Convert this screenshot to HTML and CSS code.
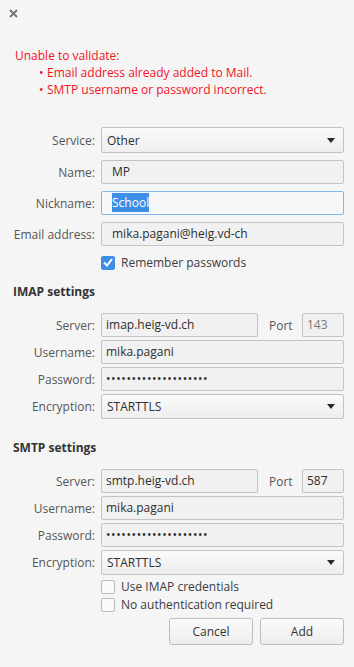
FILE: index.html
```html
<!DOCTYPE html>
<html>
<head>
<meta charset="utf-8">
<link rel="stylesheet" href="styles.css">
</head>
<body>
<div class="dialog">
  <div class="titlebar">
    <svg class="close" width="9" height="9" viewBox="0 0 9 9"><path d="M1 1 L8 8 M8 1 L1 8" stroke="#7b7b7b" stroke-width="2"/></svg>
  </div>
  <div class="errors">
    <div class="err-title">Unable to validate:</div>
    <ul>
      <li>Email address already added to Mail.</li>
      <li>SMTP username or password incorrect.</li>
    </ul>
  </div>

  <div class="form top">
    <label class="lbl">Service:</label>
    <div class="combo tall"><span>Other</span><span class="arrow"></span></div>
    <label class="lbl">Name:</label>
    <div class="entry pad">MP</div>
    <label class="lbl">Nickname:</label>
    <div class="entry pad focus"><span class="sel">School</span></div>
    <label class="lbl">Email address:</label>
    <div class="entry pad">mika.pagani@heig.vd-ch</div>
    <span></span>
    <div class="check-row"><span class="cb checked"><svg width="10" height="9" viewBox="0 0 10 9"><path d="M1 4.5 L4 7.5 L9 1" stroke="#fff" stroke-width="2" fill="none"/></svg></span>Remember passwords</div>
  </div>

  <h2 class="section imap">IMAP settings</h2>
  <div class="form sec">
    <label class="lbl">Server:</label>
    <div class="server-row">
      <div class="entry grow">imap.heig-vd.ch</div>
      <span class="port-lbl">Port</span>
      <div class="entry port dim">143</div>
    </div>
    <label class="lbl">Username:</label>
    <div class="entry">mika.pagani</div>
    <label class="lbl">Password:</label>
    <div class="entry dots">••••••••••••••••••••</div>
    <label class="lbl">Encryption:</label>
    <div class="combo enc"><span>STARTTLS</span><span class="arrow"></span></div>
  </div>

  <h2 class="section smtp">SMTP settings</h2>
  <div class="form sec">
    <label class="lbl">Server:</label>
    <div class="server-row">
      <div class="entry grow">smtp.heig-vd.ch</div>
      <span class="port-lbl">Port</span>
      <div class="entry port">587</div>
    </div>
    <label class="lbl">Username:</label>
    <div class="entry">mika.pagani</div>
    <label class="lbl">Password:</label>
    <div class="entry dots">••••••••••••••••••••</div>
    <label class="lbl">Encryption:</label>
    <div class="combo enc"><span>STARTTLS</span><span class="arrow"></span></div>
    <span></span>
    <div class="checks">
      <div class="check-row"><span class="cb"></span>Use IMAP credentials</div>
      <div class="check-row"><span class="cb"></span>No authentication required</div>
    </div>
  </div>

  <div class="buttons">
    <button class="btn">Cancel</button>
    <button class="btn">Add</button>
  </div>
</div>
</body>
</html>
```
FILE: styles.css
```css
* { box-sizing: border-box; }
html, body { margin: 0; padding: 0; }
body {
  background: #f5f5f5;
  font-family: "Open Sans", "DejaVu Sans", sans-serif;
  font-size: 12px;
  color: #3c3c3c;
  width: 354px;
  height: 667px;
  overflow: hidden;
}
.dialog { padding: 0 10px 0 0; }
.titlebar { height: 26px; padding: 9px 0 0 9px; }
.close { display: block; }

.errors {
  color: #f0141e;
  font-size: 12px;
  line-height: 17px;
  padding: 21px 0 0 15px;
}
.errors ul { margin: 0; padding: 0 0 0 24px; list-style: none; }
.errors li { position: relative; padding-left: 8px; }
.errors li::before {
  content: "•";
  position: absolute;
  left: 0;
  top: 0;
}

.form {
  display: grid;
  grid-template-columns: 95px 243px;
  column-gap: 6px;
  align-items: center;
}
.form.top { margin-top: 29px; row-gap: 7px; }
.form.sec { margin-top: 13px; row-gap: 3px; }
.lbl {
  text-align: right;
  color: #555;
  white-space: nowrap;
  font-size: 12px;
}
.entry {
  height: 24px;
  border: 1px solid #c3c3c3;
  border-radius: 2px;
  background: #f1f1f1;
  color: #2e2e2e;
  padding: 0 4px;
  line-height: 22px;
  white-space: nowrap;
  overflow: hidden;
}
.entry.pad { padding-left: 10px; }
.entry.focus {
  border-color: #85b6ec;
  background: #f6f7f8;
}
.sel {
  background: #3d8fe6;
  color: #fff;
  padding: 1px 0;
}
.entry.dots { letter-spacing: 0.6px; font-size: 12px; }
.entry.dim { color: #777; }
.combo {
  height: 26px;
  border: 1px solid #c3c3c3;
  border-radius: 2px;
  background: linear-gradient(#fafafa, #eeeeee);
  color: #2e2e2e;
  padding: 0 8px 0 5px;
  display: flex;
  align-items: center;
  justify-content: space-between;
}
.combo.enc { height: 25px; }
.arrow {
  width: 0; height: 0;
  border-left: 4.5px solid transparent;
  border-right: 4.5px solid transparent;
  border-top: 5px solid #2a2a2a;
}
.server-row { display: flex; align-items: center; }
.server-row .grow { width: 157px; }
.port-lbl { color: #555; margin-left: 11px; width: 33px; }
.entry.port { width: 42px; }

.section {
  font-size: 12px;
  font-weight: bold;
  color: #333;
  margin: 0;
  padding-left: 13px;
  line-height: 16px;
}
.section.imap { margin-top: 13px; }
.section.smtp { margin-top: 21px; }

.check-row {
  display: flex;
  align-items: center;
  height: 17px;
  color: #3c3c3c;
}
.top .check-row { margin-top: 1px; }
.checks { display: flex; flex-direction: column; row-gap: 1px; margin-top: 0; }
.cb {
  width: 14px; height: 14px;
  border: 1px solid #bcbcbc;
  border-radius: 2px;
  background: #fafafa;
  margin-right: 6px;
  display: flex;
  align-items: center;
  justify-content: center;
}
.cb.checked { background: #3d8fe6; border-color: #3d8fe6; }

.buttons {
  display: flex;
  justify-content: flex-end;
  gap: 7px;
  margin-top: 5px;
}
.btn {
  width: 84px;
  height: 27px;
  border: 1px solid #bdbdbd;
  border-radius: 3px;
  background: linear-gradient(#fbfbfb, #ededed);
  font-family: "Open Sans", "DejaVu Sans", sans-serif;
  font-size: 12px;
  color: #333;
}
```
